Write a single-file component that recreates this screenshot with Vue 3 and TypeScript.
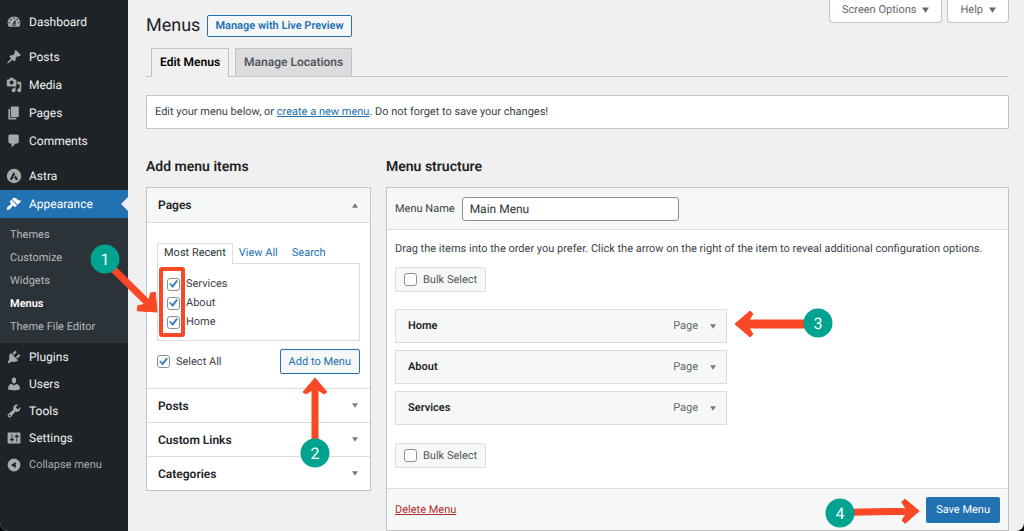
<script setup lang="ts">
import { ref } from 'vue'

interface NavItem {
  label: string
  path: string
  current?: boolean
}

const overview: NavItem[] = [
  {
    label: 'Dashboard',
    path: 'M3.76 16h12.48c1.1-1.37 1.76-3.11 1.76-5 0-4.42-3.58-8-8-8s-8 3.58-8 8c0 1.89.66 3.63 1.76 5zM10 4c.55 0 1 .45 1 1s-.45 1-1 1-1-.45-1-1 .45-1 1-1zM6 6c.55 0 1 .45 1 1s-.45 1-1 1-1-.45-1-1 .45-1 1-1zm8 0c.55 0 1 .45 1 1s-.45 1-1 1-1-.45-1-1 .45-1 1-1zm-5.37 5.55L12 7v6c0 1.1-.9 2-2 2s-2-.9-2-2c0-.57.24-1.08.63-1.45zM4 10c.55 0 1 .45 1 1s-.45 1-1 1-1-.45-1-1 .45-1 1-1zm12 0c.55 0 1 .45 1 1s-.45 1-1 1-1-.45-1-1 .45-1 1-1zm-5 3c0-.55-.45-1-1-1s-1 .45-1 1 .45 1 1 1 1-.45 1-1z',
  },
]

const content: NavItem[] = [
  {
    label: 'Posts',
    path: 'M10.44 3.02l1.82-1.82 6.36 6.35-1.83 1.82c-1.05-.68-2.48-.57-3.41.36l-.75.75c-.92.93-1.04 2.35-.35 3.41l-1.83 1.82-2.41-2.41-2.8 2.79c-.42.42-3.38 2.71-3.8 2.29s1.86-3.39 2.28-3.81l2.79-2.79L4.1 9.36l1.83-1.82c1.05.69 2.48.57 3.4-.36l.75-.75c.93-.92 1.05-2.35.36-3.41z',
  },
  {
    label: 'Media',
    path: 'M13 11V4c0-.55-.45-1-1-1h-1.67L9 1H5L3.67 3H2c-.55 0-1 .45-1 1v7c0 .55.45 1 1 1h10c.55 0 1-.45 1-1zM7 4.5c1.38 0 2.5 1.12 2.5 2.5S8.38 9.5 7 9.5 4.5 8.38 4.5 7 5.62 4.5 7 4.5zM14 6h5v10.5c0 1.38-1.12 2.5-2.5 2.5S14 17.88 14 16.5s1.12-2.5 2.5-2.5c.17 0 .34.02.5.05V9h-3V6zm-4 8.05V13h2v3.5c0 1.38-1.12 2.5-2.5 2.5S7 17.88 7 16.5 8.12 14 9.5 14c.17 0 .34.02.5.05z',
  },
  { label: 'Pages', path: 'M6 15V2h10v13H6zm-1 1h8v2H3V5h2v11z' },
  {
    label: 'Comments',
    path: 'M5 2h9c1.1 0 2 .9 2 2v7c0 1.1-.9 2-2 2h-2l-5 5v-5H5c-1.1 0-2-.9-2-2V4c0-1.1.9-2 2-2z',
  },
]

const design: NavItem[] = [
  {
    label: 'Astra',
    path: 'M10 1a9 9 0 1 0 0 18 9 9 0 0 0 0-18zM9.7 4.6l1.5 3-3.6 7.2H4.6zM12 9l3.2 6h-2.8l-.8-1.8H9.7z',
  },
  {
    label: 'Appearance',
    current: true,
    path: 'M14.48 11.06L7.41 3.99l1.5-1.5c.5-.56 2.3-.47 3.51.32 1.21.8 1.43 1.28 2.91 2.1 1.18.64 2.45 1.26 4.45.85zm-.71.71L6.7 4.7 4.93 6.47c-.39.39-.39 1.02 0 1.41l1.06 1.06c.39.39.39 1.03 0 1.42-.6.6-1.43 1.11-2.21 1.69-.35.26-.7.53-1.01.84C1.43 14.23.4 16.08 1.4 17.07c.99 1 2.84-.03 4.18-1.36.31-.31.58-.66.85-1.02.57-.78 1.08-1.61 1.69-2.21.39-.39 1.02-.39 1.41 0l1.06 1.06c.39.39 1.02.39 1.41 0z',
  },
]

const submenu = ['Themes', 'Customize', 'Widgets', 'Menus', 'Theme File Editor']

const admin: NavItem[] = [
  {
    label: 'Plugins',
    path: 'M13.11 4.36L9.87 7.6 8 5.73l3.24-3.24c.35-.34 1.05-.2 1.56.32.52.51.66 1.21.31 1.55zm-8 1.77l.91-1.12 9.01 9.01-1.19.84c-.71.71-2.63 1.16-3.82 1.16H6.14L4.9 17.26c-.59.59-1.54.59-2.12 0-.59-.58-.59-1.53 0-2.12l1.24-1.24v-3.88c0-1.13.4-3.19 1.09-3.89zm7.26 3.97l3.24-3.24c.34-.35 1.04-.21 1.55.31.52.51.66 1.21.31 1.55l-3.24 3.25z',
  },
  {
    label: 'Users',
    path: 'M10 9.25c-2.27 0-2.73-3.44-2.73-3.44C7 4.02 7.82 2 9.97 2c2.16 0 2.98 2.02 2.71 3.81 0 0-.41 3.44-2.68 3.44zm0 2.57L12.72 10c2.39 0 4.52 2.33 4.52 4.53v2.49s-3.65 1.13-7.24 1.13c-3.65 0-7.24-1.13-7.24-1.13v-2.49c0-2.25 1.94-4.48 4.47-4.48z',
  },
  {
    label: 'Tools',
    path: 'M16.68 9.77c-1.34 1.34-3.3 1.67-4.95.99l-5.41 6.52c-.99.99-2.59.99-3.58 0s-.99-2.59 0-3.57l6.52-5.42c-.68-1.65-.35-3.61.99-4.95 1.28-1.28 3.12-1.62 4.72-1.06l-2.89 2.89 2.82 2.82 2.86-2.87c.53 1.58.18 3.39-1.08 4.65zM3.81 16.21c.4.39 1.04.39 1.43 0 .4-.4.4-1.04 0-1.43-.39-.4-1.03-.4-1.43 0-.39.39-.39 1.03 0 1.43z',
  },
  {
    label: 'Settings',
    path: 'M18 16V4c0-.55-.45-1-1-1H3c-.55 0-1 .45-1 1v12c0 .55.45 1 1 1h14c.55 0 1-.45 1-1zM8 11h1c.55 0 1 .45 1 1s-.45 1-1 1H8v1.5c0 .28-.22.5-.5.5s-.5-.22-.5-.5V13H6c-.55 0-1-.45-1-1s.45-1 1-1h1V5.5c0-.28.22-.5.5-.5s.5.22.5.5V11zm5-2h-1c-.55 0-1-.45-1-1s.45-1 1-1h1V5.5c0-.28.22-.5.5-.5s.5.22.5.5V7h1c.55 0 1 .45 1 1s-.45 1-1 1h-1v5.5c0 .28-.22.5-.5.5s-.5-.22-.5-.5V9z',
  },
]

const groups = [overview, content, design]

const pages = ref([
  { name: 'Services', checked: true },
  { name: 'About', checked: true },
  { name: 'Home', checked: true },
])
const selectAll = ref(true)
const bulkTop = ref(false)
const bulkBottom = ref(false)
const menuName = ref('Main Menu')
const closedPanels = ['Posts', 'Custom Links', 'Categories']
const menuItems = ['Home', 'About', 'Services']

function toggleAll() {
  pages.value.forEach((page) => (page.checked = selectAll.value))
}
</script>

<template>
  <div class="shell">
    <nav class="sidebar" aria-label="Main menu">
      <ul v-for="(group, g) in groups" :key="g" class="group">
        <li v-for="item in group" :key="item.label">
          <a href="#" class="nav-link" :class="{ current: item.current }">
            <svg class="nav-icon" viewBox="0 0 20 20" aria-hidden="true">
              <path :d="item.path" fill-rule="evenodd" />
            </svg>
            <span>{{ item.label }}</span>
          </a>
        </li>
      </ul>
      <ul class="submenu">
        <li v-for="entry in submenu" :key="entry">
          <a href="#" :class="{ active: entry === 'Menus' }">{{ entry }}</a>
        </li>
      </ul>
      <ul class="group compact">
        <li v-for="item in admin" :key="item.label">
          <a href="#" class="nav-link">
            <svg class="nav-icon" viewBox="0 0 20 20" aria-hidden="true">
              <path :d="item.path" fill-rule="evenodd" />
            </svg>
            <span>{{ item.label }}</span>
          </a>
        </li>
        <li>
          <button type="button" class="nav-link collapse">
            <svg class="nav-icon" viewBox="0 0 20 20" aria-hidden="true">
              <path
                fill-rule="evenodd"
                d="M10 2a8 8 0 1 0 0 16 8 8 0 0 0 0-16zm2.2 4.3v7.4L6.2 10z"
              />
            </svg>
            <span>Collapse menu</span>
          </button>
        </li>
      </ul>
    </nav>

    <main class="main">
      <header class="top">
        <div class="title-row">
          <h1>Menus</h1>
          <a href="#" class="preview">Manage with Live Preview</a>
        </div>
        <div class="screen-meta">
          <button type="button">
            Screen Options
            <svg class="tri" viewBox="0 0 8 6" aria-hidden="true"><path d="M0 0h8L4 6z" /></svg>
          </button>
          <button type="button">
            Help
            <svg class="tri" viewBox="0 0 8 6" aria-hidden="true"><path d="M0 0h8L4 6z" /></svg>
          </button>
        </div>
      </header>

      <nav class="tabs" aria-label="Menu screens">
        <a href="#" class="tab selected">Edit Menus</a>
        <a href="#" class="tab">Manage Locations</a>
      </nav>

      <p class="notice">
        Edit your menu below, or <a href="#">create a new menu</a>. Do not forget to save your changes!
      </p>

      <div class="columns">
        <section class="add-column">
          <h2>Add menu items</h2>
          <div class="box">
            <button type="button" class="panel-head open">
              Pages
              <svg class="tri small" viewBox="0 0 8 6" aria-hidden="true"><path d="M0 6h8L4 0z" /></svg>
            </button>
            <div class="panel-body">
              <div class="page-tabs">
                <a href="#" class="chosen">Most Recent</a>
                <a href="#">View All</a>
                <a href="#">Search</a>
              </div>
              <div class="page-list">
                <label v-for="page in pages" :key="page.name" class="check">
                  <input v-model="page.checked" type="checkbox" />
                  {{ page.name }}
                </label>
                <svg class="mark mark-one" viewBox="0 0 100 100" aria-hidden="true">
                  <rect class="frame" x="76" y="16" width="22" height="66" rx="1" />
                  <g transform="translate(72 59) rotate(44.5)">
                    <path class="arrow" d="M0 0L-15-13-18-9-14-3H-64V3H-14L-18 9-15 13Z" />
                  </g>
                  <circle cx="20" cy="6" r="14.5" />
                  <text x="20" y="12">1</text>
                </svg>
              </div>
              <div class="actions">
                <label class="check spaced">
                  <input v-model="selectAll" type="checkbox" @change="toggleAll" />
                  Select All
                </label>
                <div class="anchor">
                  <button type="button" class="add">Add to Menu</button>
                  <svg class="mark mark-two" viewBox="0 0 30 92" aria-hidden="true">
                    <g transform="translate(15 2) rotate(-90)">
                      <path class="arrow" d="M0 0L-14-12-16-9-12-3H-64V3H-12L-16 9-14 12Z" />
                    </g>
                    <circle cx="15" cy="77" r="14.5" />
                    <text x="15" y="83">2</text>
                  </svg>
                </div>
              </div>
            </div>
            <button v-for="name in closedPanels" :key="name" type="button" class="panel-head">
              {{ name }}
              <svg class="tri small" viewBox="0 0 8 6" aria-hidden="true"><path d="M0 0h8L4 6z" /></svg>
            </button>
          </div>
        </section>

        <section class="structure-column">
          <h2>Menu structure</h2>
          <div class="box">
            <div class="name-row">
              <label for="menu-name">Menu Name</label>
              <input id="menu-name" v-model="menuName" type="text" />
            </div>
            <div class="structure">
              <p>
                Drag the items into the order you prefer. Click the arrow on the right of the item to reveal
                additional configuration options.
              </p>
              <label class="bulk check spaced">
                <input v-model="bulkTop" type="checkbox" />
                Bulk Select
              </label>
              <ul class="items">
                <li v-for="(item, i) in menuItems" :key="item">
                  <strong>{{ item }}</strong>
                  <span class="kind">Page</span>
                  <button type="button" :aria-label="`Edit ${item}`">
                    <svg class="tri small" viewBox="0 0 8 6" aria-hidden="true"><path d="M0 0h8L4 6z" /></svg>
                  </button>
                  <svg v-if="i === 0" class="mark mark-three" viewBox="0 0 100 30" aria-hidden="true">
                    <g transform="translate(1 16) rotate(180)">
                      <path class="arrow" d="M0 0L-15-13-18-10-14-4H-72V4H-14L-18 10-15 13Z" />
                    </g>
                    <circle cx="84" cy="15" r="14.5" />
                    <text x="84" y="21">3</text>
                  </svg>
                </li>
              </ul>
              <label class="bulk check spaced">
                <input v-model="bulkBottom" type="checkbox" />
                Bulk Select
              </label>
            </div>
            <footer class="box-foot">
              <a href="#" class="delete">Delete Menu</a>
              <div class="anchor">
                <button type="button" class="save">Save Menu</button>
                <svg class="mark mark-four" viewBox="0 0 96 32" aria-hidden="true">
                  <g transform="translate(94 14) rotate(-1)">
                    <path class="arrow" d="M0 0L-14-12-17-9-13-3H-70V3H-13L-17 9-14 12Z" />
                  </g>
                  <circle cx="15" cy="16" r="14.5" />
                  <text x="15" y="22">4</text>
                </svg>
              </div>
            </footer>
          </div>
        </section>
      </div>
    </main>
  </div>
</template>

<style>
html {
  background: #000;
}
body {
  margin: 0;
}
</style>

<style scoped>
* {
  box-sizing: border-box;
}
.shell {
  display: flex;
  min-height: 100vh;
  overflow: hidden;
  border-radius: 0 0 8px 8px;
  background: #f0f0f1;
  color: #3c434a;
  font: 11px/16px Roboto, 'Liberation Sans', sans-serif;
  text-rendering: geometricPrecision;
}
ul,
h1,
h2,
p {
  margin: 0;
  padding: 0;
  list-style: none;
}
button,
input {
  margin: 0;
  font: inherit;
  color: inherit;
  text-rendering: inherit;
}
a {
  color: #2271b1;
}

.sidebar {
  flex: 0 0 128px;
  padding-top: 8px;
  background: #1d2327;
}
.group + .group {
  margin-top: 7px;
}
.nav-link {
  position: relative;
  display: flex;
  align-items: center;
  gap: 7px;
  width: 100%;
  height: 28px;
  padding: 0 6px;
  border: 0;
  background: none;
  color: #f0f0f1;
  font-size: 12px;
  text-decoration: none;
}
.compact .nav-link {
  height: 27px;
}
.nav-icon {
  width: 16px;
  height: 16px;
  fill: #a7aaad;
}
.nav-link.current {
  background: #2271b1;
  color: #fff;
}
.current .nav-icon {
  fill: #fff;
}
.current::after {
  content: '';
  position: absolute;
  right: 0;
  border: 7px solid transparent;
  border-right-color: #f0f0f1;
  border-left-width: 0;
}
.submenu {
  padding: 5px 0 5px;
  background: #2c3338;
}
.submenu a {
  display: block;
  padding-left: 10px;
  color: #b4b9be;
  line-height: 23px;
  text-decoration: none;
}
.submenu a.active {
  color: #fff;
  font-weight: 600;
}
.nav-link.collapse {
  color: #a7aaad;
  font-size: 11px;
}

.main {
  flex: 1;
  min-width: 0;
  padding: 0 15px 0 18px;
}
.top {
  display: flex;
  justify-content: space-between;
  height: 48px;
}
.title-row {
  display: flex;
  align-items: center;
  gap: 7px;
  padding-top: 4px;
}
h1 {
  color: #1d2327;
  font-size: 18px;
  font-weight: 400;
  line-height: 24px;
}
.preview {
  padding: 2px 7px;
  border: 1px solid #2271b1;
  border-radius: 2px;
  background: #f6f7f7;
  font-weight: 600;
  text-decoration: none;
}
.screen-meta {
  display: flex;
  align-items: flex-start;
  gap: 5px;
}
.screen-meta button {
  display: flex;
  align-items: center;
  gap: 6px;
  height: 23px;
  padding: 0 12px 2px;
  border: 1px solid #c3c4c7;
  border-top: 0;
  border-radius: 0 0 4px 4px;
  background: #fff;
  color: #646970;
}
.tri {
  width: 7px;
  height: 6px;
  fill: #646970;
}
.tri.small {
  width: 6px;
  height: 5px;
  fill: #787c82;
}
.tabs {
  display: flex;
  gap: 6px;
  height: 29px;
  padding-left: 5px;
  border-bottom: 1px solid #c3c4c7;
}
.tab {
  height: 28px;
  padding: 0 8px;
  border: 1px solid #c3c4c7;
  border-bottom: 0;
  background: #dcdcde;
  color: #50575e;
  font-size: 12px;
  font-weight: 600;
  line-height: 27px;
  text-decoration: none;
}
.tab.selected {
  height: 29px;
  background: #f0f0f1;
  color: #000;
}
.notice {
  margin-top: 18px;
  padding: 8px;
  border: 1px solid #c3c4c7;
  background: #fff;
}

.columns {
  display: flex;
  gap: 15px;
  margin-top: 29px;
}
h2 {
  margin-bottom: 11px;
  color: #1d2327;
  font-size: 14px;
  font-weight: 600;
  line-height: 18px;
}
.add-column {
  flex: 0 0 225px;
}
.structure-column {
  flex: 1;
  min-width: 0;
}
.box {
  border: 1px solid #c3c4c7;
  background: #fff;
}
.panel-head {
  display: flex;
  align-items: center;
  justify-content: space-between;
  width: 100%;
  height: 35px;
  padding: 0 12px 0 11px;
  border: 0;
  background: #fff;
  color: #1d2327;
  font-size: 12px;
  font-weight: 600;
}
.panel-head:not(.open) {
  height: 34px;
  border-top: 1px solid #dcdcde;
}
.panel-head.open {
  border-bottom: 1px solid #dcdcde;
  background: #f6f7f7;
}
.panel-body {
  padding: 20px 10px 14px;
}
.page-tabs {
  display: flex;
  align-items: flex-end;
  gap: 6px;
  height: 20px;
}
.page-tabs a {
  height: 20px;
  line-height: 20px;
  text-decoration: none;
}
.page-tabs a + a + a {
  margin-left: 8px;
}
.page-tabs .chosen {
  z-index: 1;
  height: 21px;
  margin-bottom: -1px;
  padding: 0 6px;
  border: 1px solid #dcdcde;
  border-bottom: 0;
  background: #fff;
  color: #2c3338;
  line-height: 18px;
}
.page-list {
  position: relative;
  display: grid;
  gap: 3px;
  padding: 12px 9px 10px;
  border: 1px solid #dcdcde;
}
.check {
  display: flex;
  align-items: center;
  gap: 6px;
}
.check input {
  appearance: none;
  display: grid;
  place-items: center;
  flex: none;
  width: 13px;
  height: 13px;
  border: 1px solid #8c8f94;
  border-radius: 3px;
  background: #fff;
}
.check input:checked::before {
  content: '';
  width: 9px;
  height: 8px;
  background: #3582c4;
  clip-path: polygon(0 48%, 18% 36%, 38% 62%, 82% 0, 100% 12%, 42% 100%);
}
.actions {
  display: flex;
  align-items: center;
  justify-content: space-between;
  margin-top: 8px;
}
.anchor {
  position: relative;
}
.anchor button {
  display: block;
}
.add {
  height: 25px;
  padding: 0 8px;
  border: 1px solid #2271b1;
  border-radius: 2px;
  background: #f6f7f7;
  color: #2271b1;
}

.name-row {
  display: flex;
  align-items: center;
  gap: 7px;
  height: 42px;
  padding: 0 8px;
  border-bottom: 1px solid #dcdcde;
  background: #f6f7f7;
}
.name-row input {
  width: 217px;
  height: 24px;
  padding: 0 7px;
  border: 1px solid #8c8f94;
  border-radius: 3px;
  background: #fff;
  color: #2c3338;
  font-size: 12px;
}
.structure {
  display: flex;
  flex-direction: column;
  align-items: flex-start;
  padding: 11px 8px 20px;
}
.bulk {
  height: 25px;
  margin-top: 10px;
  padding: 0 8px;
  border: 1px solid #dcdcde;
  border-radius: 2px;
  background: #f6f7f7;
  color: #50575e;
}
.items {
  display: grid;
  gap: 7px;
  width: 332px;
  margin: 17px 0 8px;
}
.items li {
  position: relative;
  display: flex;
  align-items: center;
  height: 34px;
  padding: 0 6px 0 12px;
  border: 1px solid #dcdcde;
  background: #f6f7f7;
}
.items strong {
  flex: 1;
  color: #1d2327;
  font-weight: 600;
}
.kind {
  color: #646970;
}
.items button {
  display: grid;
  place-items: center;
  width: 14px;
  height: 20px;
  margin-left: 8px;
  padding: 0;
  border: 0;
  background: none;
}
.box-foot {
  display: flex;
  align-items: center;
  justify-content: space-between;
  height: 42px;
  padding: 0 8px;
  border-top: 1px solid #dcdcde;
  background: #f6f7f7;
}
.delete {
  color: #b32d2e;
}
.save {
  height: 26px;
  padding: 0 10px;
  border: 0;
  border-radius: 2px;
  background: #2271b1;
  color: #fff;
}

/* Numbered step markers, each anchored to the control it points at */
.mark {
  position: absolute;
  z-index: 2;
  overflow: visible;
  pointer-events: none;
}
.mark circle {
  fill: #00a38f;
}
.mark text {
  fill: #fff;
  font-size: 16px;
  text-anchor: middle;
}
.arrow {
  fill: #f84825;
  stroke: #f84825;
  stroke-linejoin: round;
}
.frame {
  fill: none;
  stroke: #f84825;
  stroke-width: 4;
}
.mark-one {
  top: -11px;
  left: -73px;
  width: 100px;
  height: 100px;
}
.mark-two {
  top: 27px;
  left: 20px;
  width: 30px;
  height: 92px;
}
.mark-three {
  top: -2px;
  left: 338px;
  width: 100px;
  height: 30px;
}
.mark-four {
  top: 0;
  right: 79px;
  width: 96px;
  height: 32px;
}
</style>
